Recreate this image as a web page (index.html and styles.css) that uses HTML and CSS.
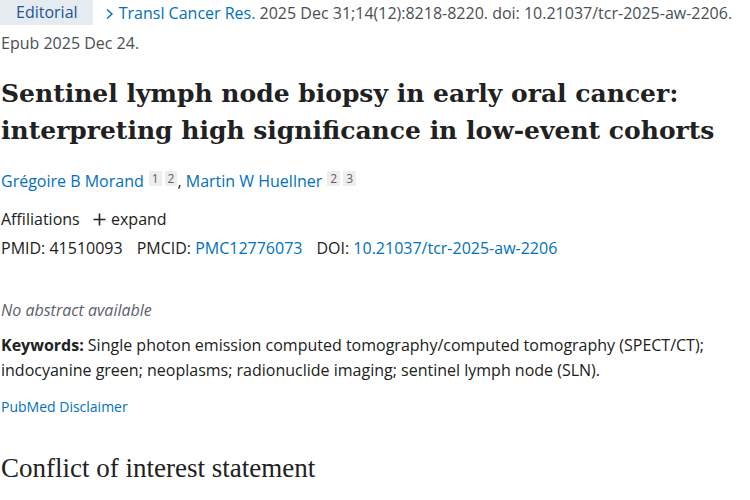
FILE: index.html
```html
<!DOCTYPE html>
<html>
<head>
<meta charset="utf-8">
<link rel="stylesheet" href="styles.css">
</head>
<body>
<main class="article">
  <div class="citation">
    <span class="type">Editorial</span>
    <a class="journal" href="#"><svg class="chev" width="9" height="12" viewBox="0 0 9 12"><path d="M2 1.5 L7 6 L2 10.5" fill="none" stroke="#0071bc" stroke-width="1.4"/></svg>Transl Cancer Res.</a>
    <span class="cit">2025 Dec 31;14(12):8218-8220. doi: 10.21037/tcr-2025-aw-2206. Epub 2025 Dec 24.</span>
  </div>
  <h1 class="title">Sentinel lymph node biopsy in early oral cancer: interpreting high significance in low-event cohorts</h1>
  <div class="authors">
    <a href="#">Grégoire B Morand</a><span class="affs"><span class="aff">1</span><span class="aff">2</span></span>, <a href="#">Martin W Huellner</a><span class="affs"><span class="aff">2</span><span class="aff">3</span></span>
  </div>
  <div class="affil">Affiliations <span class="expand"><svg class="plus" width="13" height="13" viewBox="0 0 13 13"><path d="M6.5 0.5 V12.5 M0.5 6.5 H12.5" stroke="#212121" stroke-width="1.6"/></svg> expand</span></div>
  <div class="ids">
    <span>PMID: 41510093</span>
    <span>PMCID: <a href="#">PMC12776073</a></span>
    <span>DOI: <a href="#">10.21037/tcr-2025-aw-2206</a></span>
  </div>
  <p class="noabs">No abstract available</p>
  <p class="keywords"><strong>Keywords:</strong> Single photon emission computed tomography/computed tomography (SPECT/CT); indocyanine green; neoplasms; radionuclide imaging; sentinel lymph node (SLN).</p>
  <a class="disclaimer" href="#">PubMed Disclaimer</a>
  <h2 class="section">Conflict of interest statement</h2>
  <p class="coi">Conflicts of Interest: Both authors have completed the ICMJE uniform disclosure form.</p>
</main>
</body>
</html>
```
FILE: styles.css
```css
html, body {
  margin: 0;
  padding: 0;
  background: #fff;
}
body {
  font-family: "Open Sans", "Noto Sans", sans-serif;
  color: #212121;
  font-size: 16px;
}
a {
  color: #0071bc;
  text-decoration: none;
}
.article {
  padding: 0 0 0 1px;
  overflow: hidden;
  height: 500px;
}
.citation {
  line-height: 30px;
  color: #4a4f55;
  margin-top: -2px;
}
.type {
  display: inline-block;
  background: #e6ebf2;
  color: #205493;
  padding: 2px 15px 0 16px;
  margin-left: -1px;
  line-height: 25px;
  margin-right: 8px;
  vertical-align: top;
}
.chev {
  margin-right: 5px;
  vertical-align: -1px;
}
.title {
  font-family: "DejaVu Serif", serif;
  font-weight: bold;
  font-size: 25px;
  line-height: 37px;
  margin: 17px 0 0 0;
  color: #212121;
}
.authors {
  margin-top: 20px;
  line-height: 24px;
}
.affs {
  display: inline-flex;
  gap: 3px;
  margin-left: 5px;
  vertical-align: 4px;
}
.aff {
  display: inline-block;
  background: #eeeeee;
  color: #5b616b;
  font-size: 12px;
  line-height: 15px;
  padding: 0 3px;
}
.affil {
  margin-top: 14px;
  line-height: 24px;
}
.expand {
  margin-left: 9px;
}
.plus {
  vertical-align: -1px;
  margin-right: 1px;
}
.ids {
  line-height: 24px;
  margin-top: 5px;
  display: flex;
  gap: 14px;
}
.noabs {
  font-style: italic;
  color: #5b616b;
  margin: 38px 0 0 0;
  line-height: 24px;
}
.keywords {
  margin: 11px 0 0 0;
  line-height: 25px;
}
.disclaimer {
  display: block;
  font-size: 14px;
  margin-top: 12px;
  line-height: 24px;
}
.section {
  font-family: "Liberation Serif", serif;
  font-weight: normal;
  font-size: 27px;
  line-height: 30px;
  margin: 34px 0 0 0;
}
.coi {
  margin: 14px 0 0 0;
  line-height: 24px;
}
```
